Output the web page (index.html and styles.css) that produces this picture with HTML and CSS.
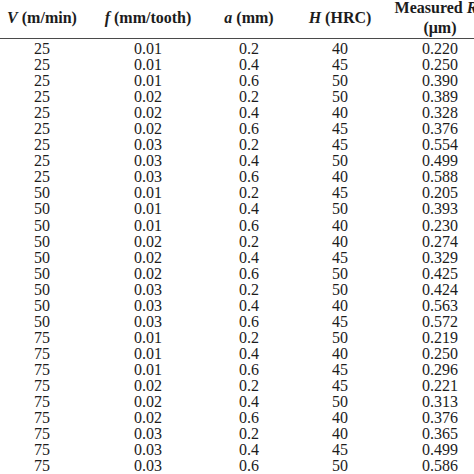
FILE: index.html
```html
<!DOCTYPE html>
<html>
<head>
<meta charset="utf-8">
<link rel="stylesheet" href="styles.css">
</head>
<body>
<div class="wrap">
<table class="data">
<colgroup>
<col class="c1"><col class="c2"><col class="c3"><col class="c4"><col class="c5">
</colgroup>
<thead>
<tr>
<th><i>V</i> (m/min)</th>
<th><i>f</i> (mm/tooth)</th>
<th><i>a</i> (mm)</th>
<th><i>H</i> (HRC)</th>
<th>Measured <i>R</i>a<br>(μm)</th>
</tr>
</thead>
<tbody>
<tr class="first"><td>25</td><td>0.01</td><td>0.2</td><td>40</td><td>0.220</td></tr>
<tr><td>25</td><td>0.01</td><td>0.4</td><td>45</td><td>0.250</td></tr>
<tr><td>25</td><td>0.01</td><td>0.6</td><td>50</td><td>0.390</td></tr>
<tr><td>25</td><td>0.02</td><td>0.2</td><td>50</td><td>0.389</td></tr>
<tr><td>25</td><td>0.02</td><td>0.4</td><td>40</td><td>0.328</td></tr>
<tr><td>25</td><td>0.02</td><td>0.6</td><td>45</td><td>0.376</td></tr>
<tr><td>25</td><td>0.03</td><td>0.2</td><td>45</td><td>0.554</td></tr>
<tr><td>25</td><td>0.03</td><td>0.4</td><td>50</td><td>0.499</td></tr>
<tr><td>25</td><td>0.03</td><td>0.6</td><td>40</td><td>0.588</td></tr>
<tr><td>50</td><td>0.01</td><td>0.2</td><td>45</td><td>0.205</td></tr>
<tr><td>50</td><td>0.01</td><td>0.4</td><td>50</td><td>0.393</td></tr>
<tr><td>50</td><td>0.01</td><td>0.6</td><td>40</td><td>0.230</td></tr>
<tr><td>50</td><td>0.02</td><td>0.2</td><td>40</td><td>0.274</td></tr>
<tr><td>50</td><td>0.02</td><td>0.4</td><td>45</td><td>0.329</td></tr>
<tr><td>50</td><td>0.02</td><td>0.6</td><td>50</td><td>0.425</td></tr>
<tr><td>50</td><td>0.03</td><td>0.2</td><td>50</td><td>0.424</td></tr>
<tr><td>50</td><td>0.03</td><td>0.4</td><td>40</td><td>0.563</td></tr>
<tr><td>50</td><td>0.03</td><td>0.6</td><td>45</td><td>0.572</td></tr>
<tr><td>75</td><td>0.01</td><td>0.2</td><td>50</td><td>0.219</td></tr>
<tr><td>75</td><td>0.01</td><td>0.4</td><td>40</td><td>0.250</td></tr>
<tr><td>75</td><td>0.01</td><td>0.6</td><td>45</td><td>0.296</td></tr>
<tr><td>75</td><td>0.02</td><td>0.2</td><td>45</td><td>0.221</td></tr>
<tr><td>75</td><td>0.02</td><td>0.4</td><td>50</td><td>0.313</td></tr>
<tr><td>75</td><td>0.02</td><td>0.6</td><td>40</td><td>0.376</td></tr>
<tr><td>75</td><td>0.03</td><td>0.2</td><td>40</td><td>0.365</td></tr>
<tr><td>75</td><td>0.03</td><td>0.4</td><td>45</td><td>0.499</td></tr>
<tr><td>75</td><td>0.03</td><td>0.6</td><td>50</td><td>0.586</td></tr>
</tbody>
</table>
</div>
</body>
</html>
```
FILE: styles.css
```css
html, body {
  margin: 0;
  padding: 0;
  background: #ffffff;
  overflow: hidden;
}
.wrap {
  width: 474px;
  height: 474px;
  overflow: hidden;
}
.data {
  border-collapse: collapse;
  table-layout: fixed;
  width: 486px;
  margin-top: -4px;
  font-family: "Liberation Serif", "Times New Roman", serif;
  font-size: 16px;
  color: #1c1c1c;
}
.c1 { width: 84px; }
.c2 { width: 128px; }
.c3 { width: 74px; }
.c4 { width: 108px; }
.c5 { width: 92px; }
.data th {
  font-weight: bold;
  line-height: 20px;
  padding: 2px 0 0 0;
  text-align: center;
  vertical-align: middle;
  white-space: nowrap;
  border-bottom: 1.5px solid #4a4a4a;
}
.data td {
  padding: 0;
  line-height: 16.05px;
  height: 16.05px;
  text-align: center;
}
.data tr.first td {
  padding-top: 2px;
}
```
